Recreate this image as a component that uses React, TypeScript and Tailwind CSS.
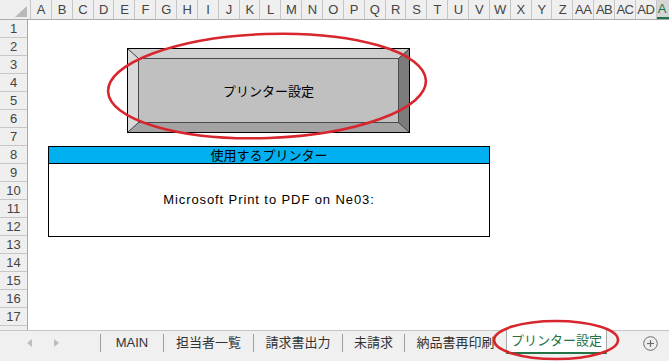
import React from "react";

const COLS = [
  ..."ABCDEFGHIJKLMNOPQRSTUVWXYZ".split(""),
  "AA",
  "AB",
  "AC",
  "AD",
];

const ROWS = Array.from({ length: 17 }, (_, i) => i + 1);

const TABS = [
  { name: "MAIN", w: "w-[63px]" },
  { name: "担当者一覧", w: "w-[90px]" },
  { name: "請求書出力", w: "w-[89px]" },
  { name: "未請求", w: "w-[62px]" },
  { name: "納品書再印刷", w: "w-[102px]" },
];

const BevelButton = () => (
  <div className="relative w-[283px] h-[85px] ml-[99px] mt-[28px] cursor-pointer">
    {/* bevel shape */}
    <svg className="absolute inset-0" width="283" height="85" viewBox="0 0 283 85">
      <polygon points="1,1 282,1 272,10 11,10" fill="#cfcfcf" />
      <polygon points="1,1 11,10 11,75 1,84" fill="#dadada" />
      <polygon points="282,1 282,84 272,75 272,10" fill="#7c7c7c" />
      <polygon points="1,84 11,75 272,75 282,84" fill="#a3a3a3" />
      <rect x="11.5" y="10.5" width="260" height="64" fill="#c0c0c0" stroke="#4a4a4a" />
      <line x1="1" y1="1" x2="11.5" y2="10.5" stroke="#3a3a3a" />
      <line x1="282" y1="1" x2="271.5" y2="10.5" stroke="#3a3a3a" />
      <line x1="1" y1="84" x2="11.5" y2="74.5" stroke="#3a3a3a" />
      <line x1="282" y1="84" x2="271.5" y2="74.5" stroke="#3a3a3a" />
      <rect x="0.5" y="0.5" width="282" height="84" fill="none" stroke="#000" />
    </svg>
    <div className="relative h-full flex items-center justify-center text-[13px] text-black pt-[2px]">
      プリンター設定
    </div>
  </div>
);

const PrinterBox = () => (
  <div className="ml-[20px] mt-[13px] w-[442px] border border-black flex flex-col">
    <div className="h-[17px] bg-[#00b0f0] border-b border-black flex items-center justify-center text-[13px] leading-none text-black">
      使用するプリンター
    </div>
    <div className="h-[72px] bg-white flex items-center justify-center text-[13px] tracking-[0.9px] text-black">
      Microsoft Print to PDF on Ne03:
    </div>
  </div>
);

export default function App() {
  return (
    <div className="relative w-[669px] h-[361px] overflow-hidden bg-white font-['Liberation_Sans','Noto_Sans_CJK_JP',sans-serif] select-none">
      {/* column headers */}
      <div className="flex h-[20px] bg-[#efefef] border-b border-[#ababab]">
        <div className="w-[31px] shrink-0 border-r border-[#c6c6c6] flex items-end justify-end pr-[3px] pb-[2px]">
          <svg width="12" height="11" viewBox="0 0 12 11">
            <polygon points="12,0 12,11 0,11" fill="#b9b9b9" />
          </svg>
        </div>
        {COLS.map((c) => (
          <div
            key={c}
            className="w-[20.86px] shrink-0 border-r border-[#c6c6c6] flex items-center justify-center text-[13px] text-[#444] leading-none tracking-[-0.5px] overflow-hidden"
          >
            {c}
          </div>
        ))}
        <div className="flex-1 bg-[#d6d6d6] border-b-2 border-[#217346] flex items-center pl-[1px] text-[13px] text-[#217346] leading-none overflow-hidden">
          A
        </div>
      </div>

      {/* sheet body */}
      <div className="flex h-[310px] overflow-hidden">
        <div className="w-[28px] shrink-0 bg-[#efefef] border-r border-[#ababab] flex flex-col">
          {ROWS.map((r) => (
            <div
              key={r}
              className="h-[18px] shrink-0 border-b border-[#c6c6c6] flex items-center justify-center text-[13px] text-[#444] leading-none"
            >
              {r}
            </div>
          ))}
        </div>
        <div className="flex-1 flex flex-col">
          <BevelButton />
          <PrinterBox />
        </div>
      </div>

      {/* sheet tabs */}
      <div className="h-[31px] bg-[#f0f0f0] border-t border-[#c6c6c6] flex items-start">
        <div className="w-[100px] h-[24px] flex items-center">
          <svg className="ml-[27px]" width="5" height="8" viewBox="0 0 5 8">
            <polygon points="5,0 5,8 0,4" fill="#bdbdbd" />
          </svg>
          <svg className="ml-[22px]" width="5" height="8" viewBox="0 0 5 8">
            <polygon points="0,0 0,8 5,4" fill="#bdbdbd" />
          </svg>
        </div>
        {TABS.map((t) => (
          <div
            key={t.name}
            className={`${t.w} h-[24px] flex items-center justify-center text-[13px] text-[#333]`}
          >
            <span className="h-[18px] border-l border-[#9e9e9e] self-center" />
            <span className="flex-1 text-center">{t.name}</span>
          </div>
        ))}
        <div className="w-[101px] h-[24px] -mt-px bg-white border-x border-[#ababab] border-b-2 border-b-[#217346] flex items-center justify-center text-[13px] text-[#217346]">
          プリンター設定
        </div>
        <div className="flex-1 h-[24px] flex items-center justify-end pr-[11px]">
          <svg width="15" height="15" viewBox="0 0 15 15">
            <circle cx="7.5" cy="7.5" r="6.8" fill="none" stroke="#6e6e6e" strokeWidth="1" />
            <line x1="4" y1="7.5" x2="11" y2="7.5" stroke="#6e6e6e" strokeWidth="1.2" />
            <line x1="7.5" y1="4" x2="7.5" y2="11" stroke="#6e6e6e" strokeWidth="1.2" />
          </svg>
        </div>
      </div>

      {/* red annotation circles */}
      <svg className="absolute inset-0 pointer-events-none" width="669" height="361" viewBox="0 0 669 361">
        <ellipse
          cx="267"
          cy="86"
          rx="159"
          ry="52"
          transform="rotate(-2 267 86)"
          fill="none"
          stroke="#d7262e"
          strokeWidth="2.6"
        />
        <ellipse cx="556" cy="340" rx="62" ry="19" fill="none" stroke="#d7262e" strokeWidth="2.6" />
      </svg>
    </div>
  );
}
